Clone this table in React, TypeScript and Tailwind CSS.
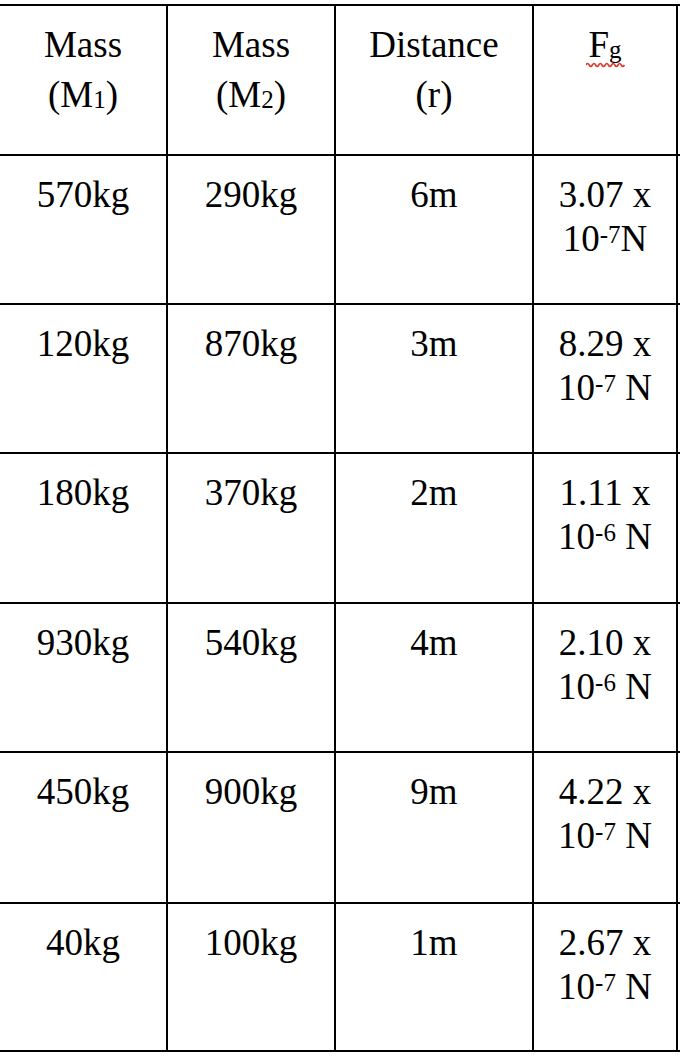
import type { ReactNode } from 'react'

type Row = {
  m1: string
  m2: string
  r: string
  coef: string
  exp: string
  gap: boolean
}

const rows: Row[] = [
  { m1: '570kg', m2: '290kg', r: '6m', coef: '3.07 x', exp: '-7', gap: false },
  { m1: '120kg', m2: '870kg', r: '3m', coef: '8.29 x', exp: '-7', gap: true },
  { m1: '180kg', m2: '370kg', r: '2m', coef: '1.11 x', exp: '-6', gap: true },
  { m1: '930kg', m2: '540kg', r: '4m', coef: '2.10 x', exp: '-6', gap: true },
  { m1: '450kg', m2: '900kg', r: '9m', coef: '4.22 x', exp: '-7', gap: true },
  { m1: '40kg', m2: '100kg', r: '1m', coef: '2.67 x', exp: '-7', gap: true },
]

// heights include the 2px bottom rule
const rowHeights = [149, 149, 150, 149, 151, 148]
const widths = ['w-[168px]', 'w-[168px]', 'w-[198px]', 'w-[144px]']

function Cell({ col, children }: { col: number; children: ReactNode }) {
  return (
    <div
      className={`${widths[col]} h-full shrink-0 border-r-2 border-black pt-[17px] text-center`}
    >
      {children}
    </div>
  )
}

function Sub({ children }: { children: ReactNode }) {
  return <span className="relative top-[1px] align-baseline text-[25px]">{children}</span>
}

function Sup({ children }: { children: ReactNode }) {
  return <span className="relative -top-[8px] align-baseline text-[25px]">{children}</span>
}

function Wavy() {
  // spell-check squiggle under the Fg header
  return (
    <svg
      className="absolute left-[-2px] top-[39px]"
      width="40"
      height="6"
      viewBox="0 0 40 6"
      fill="none"
    >
      <path
        d="M0 3 Q1.6 0 3.2 3 T6.4 3 T9.6 3 T12.8 3 T16 3 T19.2 3 T22.4 3 T25.6 3 T28.8 3 T32 3 T35.2 3 T38.4 3"
        stroke="#e0362c"
        strokeWidth="1.6"
      />
    </svg>
  )
}

export default function App() {
  return (
    <div className="h-[1058px] w-[680px] overflow-hidden bg-white pt-[4px]">
      <div
        className="ml-[-2px] w-[682px] border-l-2 border-t-2 border-black text-[37px] leading-[44px] text-black"
        style={{ fontFamily: '"Liberation Serif", "Times New Roman", serif' }}
      >
        {/* header */}
        <div className="flex h-[150px] border-b-2 border-black">
          <Cell col={0}>
            <div>Mass</div>
            <div className="mt-[6px]">
              (M<Sub>1</Sub>)
            </div>
          </Cell>
          <Cell col={1}>
            <div>Mass</div>
            <div className="mt-[6px]">
              (M<Sub>2</Sub>)
            </div>
          </Cell>
          <Cell col={2}>
            <div>Distance</div>
            <div className="mt-[6px]">(r)</div>
          </Cell>
          <Cell col={3}>
            <span className="relative inline-block">
              F<Sub>g</Sub>
              <Wavy />
            </span>
          </Cell>
        </div>

        {rows.map((row, i) => (
          <div
            key={row.m1}
            className="flex border-b-2 border-black"
            style={{ height: rowHeights[i] }}
          >
            <Cell col={0}>{row.m1}</Cell>
            <Cell col={1}>{row.m2}</Cell>
            <Cell col={2}>{row.r}</Cell>
            <Cell col={3}>
              <div>{row.coef}</div>
              <div>
                10<Sup>{row.exp}</Sup>
                {row.gap ? ' ' : ''}N
              </div>
            </Cell>
          </div>
        ))}
      </div>
    </div>
  )
}
